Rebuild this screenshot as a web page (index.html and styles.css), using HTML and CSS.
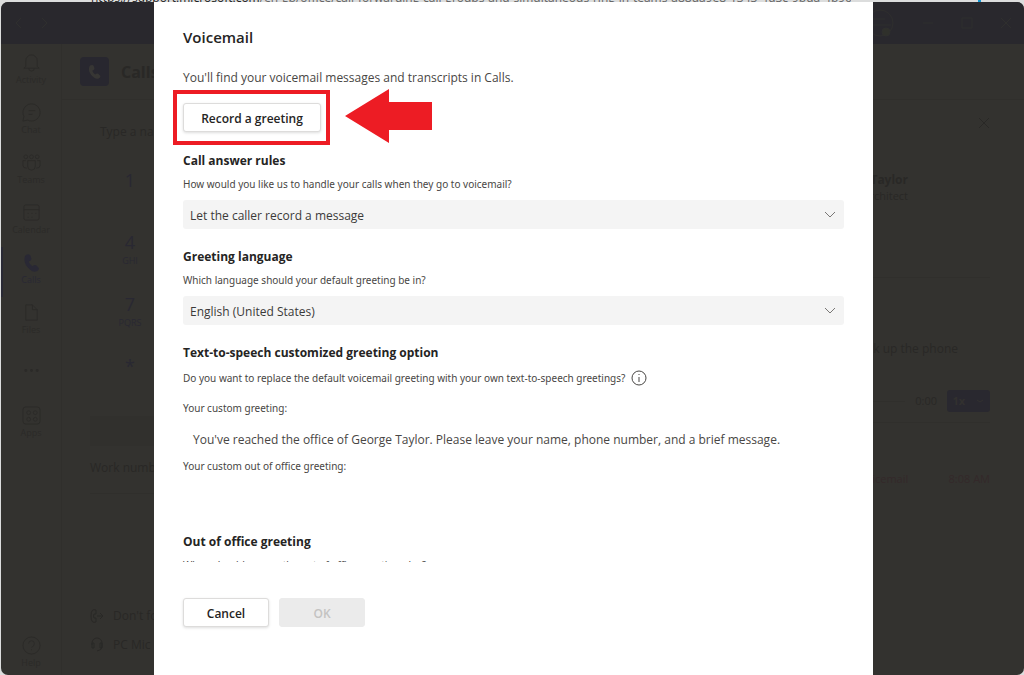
FILE: index.html
```html
<!DOCTYPE html>
<html lang="en">
<head>
<meta charset="utf-8">
<meta name="viewport" content="width=device-width, initial-scale=1">
<title>Voicemail</title>
<link rel="stylesheet" href="styles.css">
</head>
<body>
<div class="browser-strip"><span><b>https://support.microsoft.com</b>/en-gb/office/call-forwarding-call-groups-and-simultaneous-ring-in-teams-a88da9e8-1343-4d3c-9bda-4b9615e4183e</span><i class="strip-mark"></i></div>
<div class="window">
  <header class="titlebar">
    <svg class="line nav" viewBox="0 0 36 12"><path d="M7 1 2 6l5 5M28 1l5 5-5 5"/></svg>
    <div class="window-controls">
      <svg class="line avatar" viewBox="0 0 30 30"><circle cx="15" cy="15" r="13"/><path d="M5 17h21M8 11h12"/><circle class="presence" cx="21" cy="24" r="4"/></svg>
      <svg class="line" viewBox="0 0 12 12"><path d="M1 6h10"/></svg>
      <svg class="line" viewBox="0 0 12 12"><path d="M1 1h10v10H1z"/></svg>
      <svg class="line" viewBox="0 0 12 12"><path d="m1 1 10 10M11 1 1 11"/></svg>
    </div>
  </header>
  <div class="app">
    <nav class="rail">
      <a href="#" class="rail-item"><svg class="line" viewBox="0 0 20 20"><path d="M4 14V8a6 6 0 0 1 12 0v6l2 2H2zM7 16a3 3 0 0 0 6 0"/></svg>Activity</a>
      <a href="#" class="rail-item"><svg class="line" viewBox="0 0 20 20"><path d="M1 19l1-5a9 9 0 1 1 4 4zM7 8h7M7 12h4"/></svg>Chat</a>
      <a href="#" class="rail-item"><svg class="line" viewBox="0 0 20 20"><circle cx="10" cy="4" r="2"/><circle cx="4" cy="4" r="2"/><circle cx="16" cy="4" r="2"/><path d="M6 8h8v6a4 4 0 0 1-8 0zM4 8H1v5q0 3 4 3M16 8h3v5q0 3-4 3"/></svg>Teams</a>
      <a href="#" class="rail-item"><svg class="line" viewBox="0 0 20 20"><rect x="2" y="2" width="16" height="16" rx="2"/><path d="M2 7h16M6 11h1M10 11h1M14 11h1M6 15h1M10 15h1"/></svg>Calendar</a>
      <a href="#" class="rail-item active"><svg viewBox="0 0 20 20"><path d="M4 2Q8 0 9 3l1 3q0 2-3 3 1 3 4 5 2-2 4-1l2 2q2 2-1 4-4 2-8-2Q1 11 3 4z"/></svg>Calls</a>
      <a href="#" class="rail-item"><svg class="line" viewBox="0 0 20 20"><path d="M4 2h7l5 5v11H4zM11 2v5h5"/></svg>Files</a>
      <a href="#" class="rail-item more" aria-label="More"><svg viewBox="0 0 20 20"><circle cx="4" cy="10" r="1.5"/><circle cx="10" cy="10" r="1.5"/><circle cx="16" cy="10" r="1.5"/></svg></a>
      <a href="#" class="rail-item"><svg class="line" viewBox="0 0 20 20"><rect x="1" y="1" width="18" height="18" rx="3"/><circle cx="7" cy="7" r="2"/><circle cx="14" cy="7" r="2"/><circle cx="7" cy="14" r="2"/><circle cx="14" cy="14" r="2"/></svg>Apps</a>
      <a href="#" class="rail-item help"><svg class="line" viewBox="0 0 20 20"><circle cx="10" cy="10" r="9"/><path d="M7 8q0-3 3-3t3 3-3 4M10 14v1"/></svg>Help</a>
    </nav>
    <main class="calls">
      <div class="calls-head"><span class="calls-logo"><svg viewBox="0 0 20 20"><path d="M4 2Q8 0 9 3l1 3q0 2-3 3 1 3 4 5 2-2 4-1l2 2q2 2-1 4-4 2-8-2Q1 11 3 4z"/></svg></span><strong>Calls</strong></div>
      <div class="calls-body">
        <section class="dialer">
          <p class="dial-input">Type a name</p>
          <div class="key">1<small></small></div>
          <div class="key">4<small>GHI</small></div>
          <div class="key">7<small>PQRS</small></div>
          <div class="key">*</div>
          <div class="call-button"></div>
          <p class="work">Work number</p>
          <div class="devices">
            <p><svg class="line" viewBox="0 0 14 16"><path d="M6 2Q1 0 1 8t5 6M6 2v4H4q-1 2 0 4h2v4M7 8h6M10 5l3 3-3 3"/></svg>Don't forward</p>
            <p><svg class="line" viewBox="0 0 14 16"><path d="M2 8V6a5 5 0 0 1 10 0v4q0 3-5 4M2 6h2v5H2zM10 6h2v5h-2z"/></svg>PC Mic</p>
          </div>
        </section>
        <section class="details">
          <svg class="line close" viewBox="0 0 12 12"><path d="m1 1 10 10M11 1 1 11"/></svg>
          <div class="person"><strong>George Taylor</strong><span>Architect</span></div>
          <div class="transcript">
            <p>pick up the phone</p>
            <div class="player"><i></i><span>0:00</span><b>1x<svg class="line" viewBox="0 0 8 8"><path d="m1 3 3 2 3-2"/></svg></b></div>
          </div>
          <div class="history"><span>Voicemail</span><span>8:08 AM</span></div>
        </section>
      </div>
    </main>
  </div>
</div>

<div class="overlay">
  <section class="dialog" role="dialog" aria-labelledby="title">
    <h1 id="title">Voicemail</h1>
    <div class="dialog-body">
      <p class="intro">You'll find your voicemail messages and transcripts in Calls.</p>
      <div class="record-row">
        <button type="button" class="button record">Record a greeting</button>
        <span class="highlight"></span>
        <svg class="arrow" viewBox="0 0 88 54"><path d="M0 27 44 0v13h43v28H44v13z"/></svg>
      </div>

      <h2>Call answer rules</h2>
      <label class="hint" for="rules">How would you like us to handle your calls when they go to voicemail?</label>
      <div class="select">
        <select id="rules"><option>Let the caller record a message</option></select>
        <svg class="line" viewBox="0 0 12 8"><path d="m1 1 5 5 5-5"/></svg>
      </div>

      <h2>Greeting language</h2>
      <label class="hint" for="language">Which language should your default greeting be in?</label>
      <div class="select">
        <select id="language"><option>English (United States)</option></select>
        <svg class="line" viewBox="0 0 12 8"><path d="m1 1 5 5 5-5"/></svg>
      </div>

      <h2>Text-to-speech customized greeting option</h2>
      <p class="hint question">Do you want to replace the default voicemail greeting with your own text-to-speech greetings?
        <svg class="line" viewBox="0 0 16 16"><circle cx="8" cy="8" r="7"/><path d="M8 7v5M8 4v1"/></svg></p>
      <label class="hint custom" for="greeting">Your custom greeting:</label>
      <textarea id="greeting" class="greeting" rows="1">You've reached the office of George Taylor. Please leave your name, phone number, and a brief message.</textarea>
      <label class="hint away" for="away">Your custom out of office greeting:</label>
      <textarea id="away" class="greeting" rows="1"></textarea>

      <h2>Out of office greeting</h2>
      <p class="hint">When should we use the out of office greeting play?</p>
    </div>
    <footer>
      <button type="button" class="button">Cancel</button>
      <button type="button" class="button" disabled>OK</button>
    </footer>
  </section>
</div>
</body>
</html>
```
FILE: styles.css
```css
* { box-sizing: border-box; }
html, body { height: 100%; margin: 0; }
body {
  display: flex;
  flex-direction: column;
  overflow: hidden;
  background: #dcdddd;
  color: #252423;
  font: 12px/20px "Open Sans", "Noto Sans", sans-serif;
}
h1, h2, p { margin: 0; }
svg { display: block; flex: none; fill: currentColor; }
.line { fill: none; stroke: currentColor; }
button, select, textarea { font: inherit; color: inherit; }

.browser-strip {
  display: flex;
  align-items: flex-end;
  flex: none;
  height: 2px;
  padding-left: 91px;
  overflow: hidden;
  color: #666;
  line-height: 8px;
  white-space: nowrap;
}
.browser-strip span { width: 760px; overflow: hidden; }
.browser-strip b { color: #222; font-weight: 400; }
.strip-mark { width: 3px; height: 2px; margin-left: 127px; background: #1296d4; }

.window {
  display: flex;
  flex: 1;
  flex-direction: column;
  min-height: 0;
  margin-left: 1px;
  overflow: hidden;
  border-radius: 7px;
  background: #33322f;
  color: #292826;
}
.titlebar {
  display: flex;
  align-items: center;
  justify-content: space-between;
  flex: none;
  height: 42px;
  padding: 0 12px 0 13px;
  background: #29282d;
  color: #2f2f2e;
}
.nav { width: 36px; height: 12px; }
.window-controls { display: flex; align-items: center; gap: 27px; }
.window-controls svg { width: 12px; height: 12px; }
.window-controls .avatar { width: 30px; height: 30px; }
.presence { fill: #2f302b; }
.app { display: flex; flex: 1; min-height: 0; }
.rail {
  display: flex;
  flex-direction: column;
  flex: none;
  width: 61px;
  padding-top: 3px;
  border-right: 1px solid #302f2c;
}
.rail-item {
  display: flex;
  flex-direction: column;
  align-items: center;
  gap: 1px;
  height: 50px;
  padding-top: 6px;
  color: #2b2a28;
  font-size: 9px;
  line-height: 14px;
  text-decoration: none;
}
.rail-item svg { width: 19px; height: 19px; }
.rail-item.active { border-left: 2px solid #292934; padding-right: 2px; color: #292834; }
.rail-item.more { height: 53px; padding-top: 14px; }
.rail-item.help { margin-top: auto; height: 45px; }

.calls { display: flex; flex: 1; flex-direction: column; min-width: 0; }
.calls-head {
  display: flex;
  align-items: center;
  gap: 12px;
  flex: none;
  height: 56px;
  padding-left: 18px;
  border-bottom: 1px solid #302f2c;
  font-size: 16px;
}
.calls-logo {
  display: grid;
  place-items: center;
  width: 29px;
  height: 29px;
  border-radius: 4px;
  background: #28272f;
  color: #373634;
}
.calls-logo svg { width: 15px; height: 15px; }
.calls-body { display: flex; flex: 1; justify-content: space-between; min-height: 0; }
.dialer { display: flex; flex-direction: column; width: 300px; padding: 22px 0 20px 28px; }
.dial-input { margin-bottom: 26px; padding-left: 10px; }
.key {
  width: 80px;
  height: 62px;
  color: #292832;
  font-size: 18px;
  line-height: 24px;
  text-align: center;
}
.key small { display: block; font-size: 9px; line-height: 14px; }
.call-button { width: 200px; height: 30px; margin-bottom: 12px; background: #31302d; }
.work { padding-bottom: 15px; border-bottom: 1px solid #302f2c; }
.devices { display: grid; gap: 9px; margin-top: auto; }
.devices p { display: flex; align-items: center; gap: 9px; }
.devices svg { width: 14px; height: 16px; }

.details { display: flex; flex-direction: column; width: 300px; padding: 17px 34px 0 0; }
.close { width: 12px; height: 12px; align-self: flex-end; }
.person { display: grid; margin: 43px 82px 73px 0; text-align: right; line-height: 16px; }
.person span { font-size: 11px; }
.transcript {
  height: 146px;
  border-top: 1px solid #302f2c;
  border-bottom: 1px solid #302f2c;
}
.transcript p { margin: 61px 32px 31px 0; text-align: right; }
.player { display: flex; align-items: center; justify-content: flex-end; gap: 10px; font-size: 11px; }
.player i { width: 90px; height: 1px; background: #302f2c; }
.player b {
  display: flex;
  align-items: center;
  justify-content: space-around;
  width: 43px;
  height: 22px;
  border-radius: 3px;
  background: #29282f;
  color: #32312f;
}
.player b svg { width: 8px; height: 8px; }
.history {
  display: flex;
  justify-content: space-between;
  margin-top: 46px;
  padding-left: 135px;
  color: #34292a;
  font-size: 11px;
}

.overlay { position: absolute; inset: 2px 151px 0 154px; }
.dialog {
  display: flex;
  flex-direction: column;
  height: 100%;
  padding: 23px 29px 0;
  background: #fff;
}
h1 { flex: none; font-size: 15px; font-weight: 600; line-height: 24px; }
h2 { margin-top: 18px; font-size: 12px; font-weight: 700; line-height: 20px; }
.dialog-body { flex: 1; min-height: 0; overflow: hidden; margin: 0 -29px; padding: 19px 29px 0; }
.intro { color: #484644; }
.record-row { position: relative; display: flex; margin: 15px 0 19px; }
.button {
  width: 86px;
  height: 29px;
  padding: 2px 0 0;
  border: 1px solid #dddcdb;
  border-radius: 3px;
  background: #fff;
  box-shadow: 0 1px 3px #0002;
  font-weight: 600;
}
.button:disabled { border-color: #ebebeb; background: #ebebeb; box-shadow: none; color: #c4c3c2; }
.record { width: 138px; }
.highlight {
  position: absolute;
  top: -13px;
  left: -10px;
  width: 157px;
  height: 55px;
  border: 4px solid #ed1c24;
}
.arrow { position: absolute; top: -14px; left: 162px; width: 88px; height: 54px; fill: #ed1c24; }
.hint { display: block; margin-top: 3px; color: #484644; font-family: "Noto Sans", sans-serif; font-size: 10px; }
.select { position: relative; margin-top: 6px; }
.select select {
  display: block;
  width: 100%;
  height: 29px;
  padding: 2px 7px 0;
  border: 0;
  border-radius: 3px;
  appearance: none;
  background: #f4f4f4;
  color: #3b3a39;
}
.select svg { position: absolute; top: 11px; right: 8px; width: 12px; height: 8px; color: #797775; }
.question { display: flex; align-items: center; gap: 6px; margin-top: 5px; }
.question svg { width: 16px; height: 16px; }
.custom { margin-top: 10px; }
.greeting {
  display: block;
  width: 100%;
  height: 28px;
  margin-top: 10px;
  padding: 2px 10px;
  border: 0;
  resize: none;
  background: transparent;
  color: #484644;
}
.away { margin-top: 0; }
footer { display: flex; gap: 10px; flex: none; padding: 36px 0 48px; }
```
